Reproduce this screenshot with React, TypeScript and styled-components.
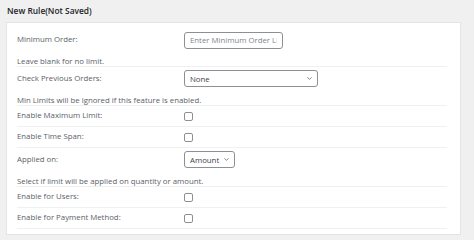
import * as React from 'react';
import styled, { createGlobalStyle } from 'styled-components';
import { ChevronDown } from 'lucide-react';

const GlobalStyle = createGlobalStyle`
  html, body {
    margin: 0;
    padding: 0;
    background: #f0f0f1;
  }
  body {
    font-family: 'Open Sans', 'Noto Sans', sans-serif;
    color: #3c434a;
  }
`;

const Page = styled.div`
  width: 474px;
  height: 238px;
  background: #f0f0f1;
  overflow: hidden;
`;

const Header = styled.div`
  height: 22px;
  display: flex;
  align-items: center;
  padding-left: 7px;
  box-sizing: border-box;
`;

const Title = styled.h2`
  margin: 0;
  font-size: 8.4px;
  font-weight: 600;
  color: #1d2327;
  line-height: 1;
`;

const Panel = styled.div`
  margin-left: 6px;
  width: 455px;
  box-sizing: border-box;
  background: #ffffff;
  border: 1px solid #e4e4e6;
  padding: 6px 13px 5px 10px;
`;

const Group = styled.div`
  border-bottom: 1px solid #f0f0f1;
`;

const Field = styled.div<{ $h?: number }>`
  display: grid;
  grid-template-columns: 167px 1fr;
  align-items: center;
  height: ${(p) => p.$h ?? 20}px;
`;

const Label = styled.label`
  font-size: 7.8px;
  color: #5a6067;
  line-height: 1;
`;

const Description = styled.p`
  margin: 0;
  padding-top: 5px;
  font-size: 7.8px;
  line-height: 10px;
  height: 15px;
  box-sizing: border-box;
  color: #5a6067;
`;

const TextInput = styled.input`
  display: block;
  width: 99px;
  height: 17px;
  box-sizing: border-box;
  border: 1px solid #8c8f94;
  border-radius: 3px;
  padding: 0 5px;
  font-family: inherit;
  font-size: 7.8px;
  color: #2c3338;
  background: #fff;
  outline: none;
  &::placeholder {
    color: #80848a;
  }
`;

const SelectWrap = styled.div<{ $w: number }>`
  position: relative;
  width: ${(p) => p.$w}px;
  height: 17px;
  svg {
    position: absolute;
    right: 5px;
    top: 5px;
    pointer-events: none;
    color: #3c434a;
  }
`;

const Select = styled.select`
  display: block;
  appearance: none;
  width: 100%;
  height: 17px;
  box-sizing: border-box;
  border: 1px solid #8c8f94;
  border-radius: 3px;
  padding: 0 14px 0 5px;
  font-family: inherit;
  font-size: 7.8px;
  color: #3c434a;
  background: #fff;
  outline: none;
`;

const Check = styled.input.attrs({ type: 'checkbox' })`
  appearance: none;
  display: block;
  margin: 0;
  width: 9px;
  height: 9px;
  border: 1px solid #8c8f94;
  border-radius: 2px;
  background: #fff;
  box-sizing: border-box;
`;

const CheckRow: React.FC<{ label: string }> = ({ label }) => (
  <Group>
    <Field>
      <Label>{label}</Label>
      <Check />
    </Field>
  </Group>
);

export default function App() {
  return (
    <Page>
      <GlobalStyle />
      <Header>
        <Title>New Rule(Not Saved)</Title>
      </Header>
      <Panel>
        <Group>
          <Field $h={22}>
            <Label>Minimum Order:</Label>
            <TextInput placeholder='Enter Minimum Order Limit' />
          </Field>
          <Description>Leave blank for no limit.</Description>
        </Group>
        <Group>
          <Field $h={23}>
            <Label>Check Previous Orders:</Label>
            <SelectWrap $w={134}>
              <Select defaultValue='none'>
                <option value='none'>None</option>
              </Select>
              <ChevronDown size={7} strokeWidth={2.2} />
            </SelectWrap>
          </Field>
          <Description>
            Min Limits will be ignored if this feature is enabled.
          </Description>
        </Group>
        <CheckRow label='Enable Maximum Limit:' />
        <CheckRow label='Enable Time Span:' />
        <Group>
          <Field $h={23}>
            <Label>Applied on:</Label>
            <SelectWrap $w={51}>
              <Select defaultValue='amount'>
                <option value='amount'>Amount</option>
              </Select>
              <ChevronDown size={7} strokeWidth={2.2} />
            </SelectWrap>
          </Field>
          <Description>
            Select if limit will be applied on quantity or amount.
          </Description>
        </Group>
        <CheckRow label='Enable for Users:' />
        <CheckRow label='Enable for Payment Method:' />
      </Panel>
    </Page>
  );
}
